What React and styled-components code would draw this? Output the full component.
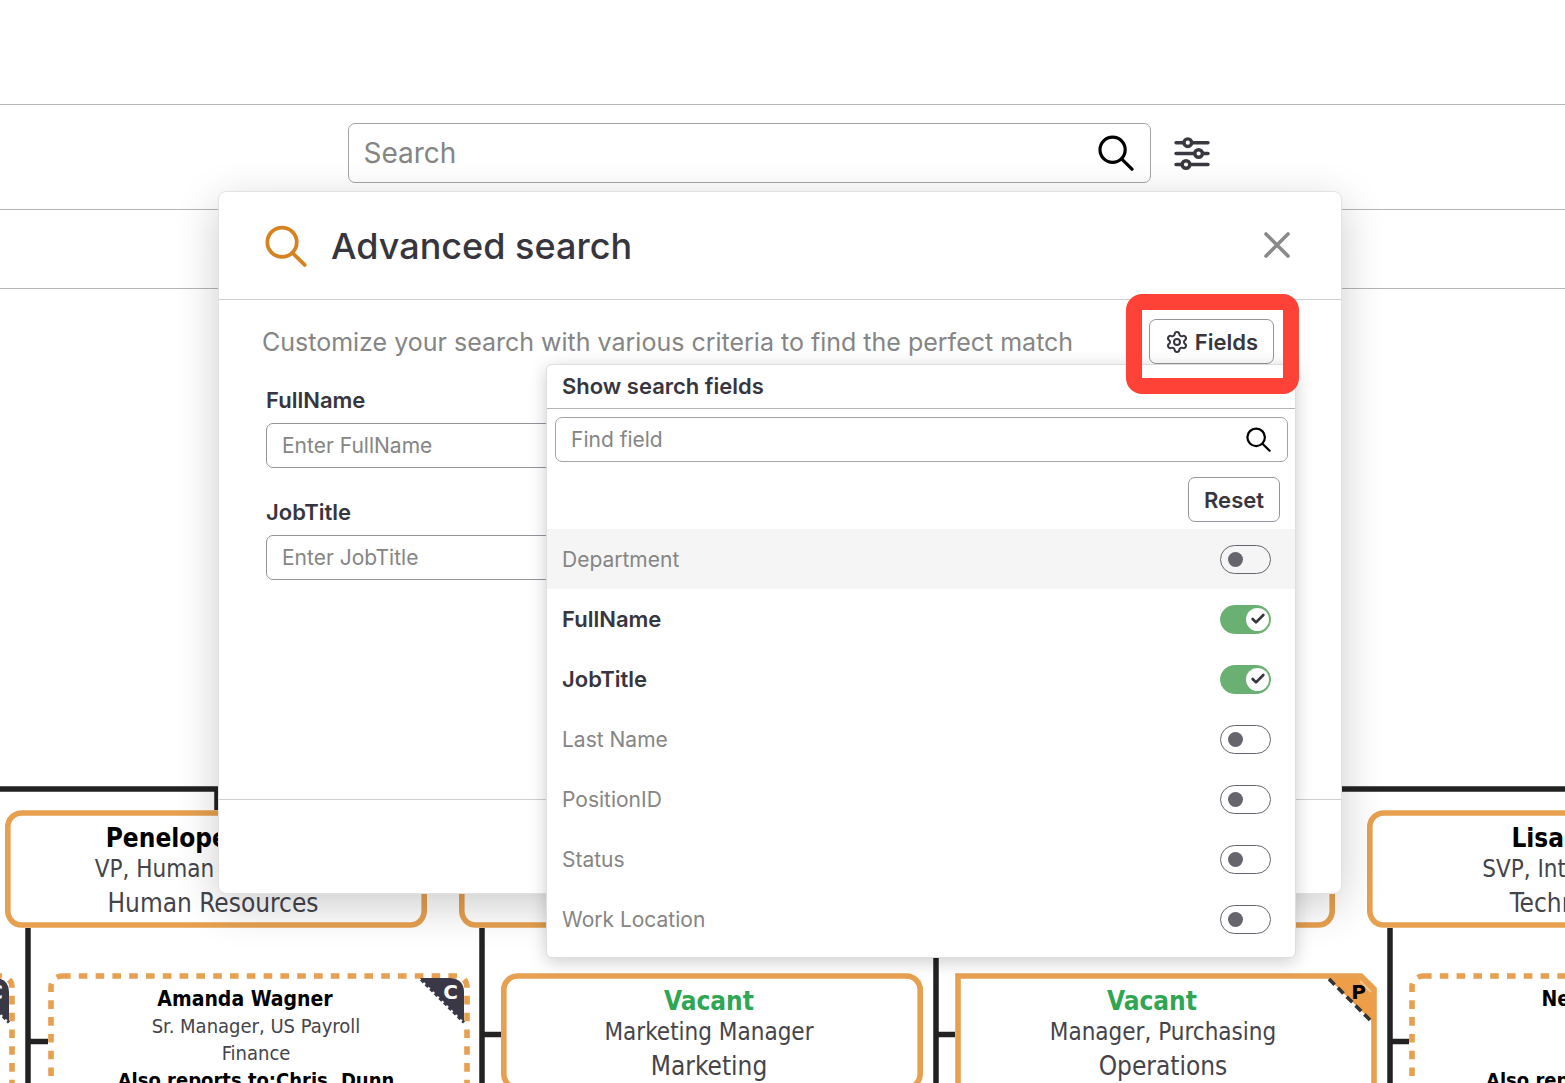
import React, { useState } from 'react';
import styled, { createGlobalStyle, css } from 'styled-components';
import { Check, Settings } from 'lucide-react';

const fieldNames = ['Department', 'FullName', 'JobTitle', 'Last Name', 'PositionID', 'Status', 'Work Location'];

const nodes = [
    {
        x: 5, y: 521, height: 118, shape: 'solid',
        name: 'Penelope Garcia', title: 'VP, Human Resources', department: 'Human Resources'
    },
    {x: 459, y: 521, height: 118, shape: 'solid'},
    {x: 913, y: 521, height: 118, shape: 'solid'},
    {
        x: 1367, y: 521, height: 118, shape: 'solid',
        name: 'Lisa Chen', title: 'SVP, Integrations', department: 'Technology'
    },
    {x: -407, y: 684, height: 140, shape: 'dashed', badge: 'C'},
    {
        x: 48, y: 684, height: 140, shape: 'dashed', badge: 'C', small: true,
        name: 'Amanda Wagner', title: 'Sr. Manager, US Payroll', department: 'Finance',
        reports: 'Also reports to:Chris, Dunn'
    },
    {
        x: 501, y: 684, height: 118, shape: 'solid', vacant: true,
        name: 'Vacant', title: 'Marketing Manager', department: 'Marketing'
    },
    {
        x: 955, y: 684, height: 118, shape: 'cut', badge: 'P', vacant: true,
        name: 'Vacant', title: 'Manager, Purchasing', department: 'Operations'
    },
    {
        x: 1409, y: 684, height: 140, shape: 'dashed', badge: 'C', small: true,
        name: 'Neil Morgan', title: 'Manager', department: 'IT',
        reports: 'Also reports to:Ann, Chen'
    }
];

const SearchIcon = ({size, color = '#000'}) => (
    <svg width={size} height={size} viewBox="0 0 36 36" fill="none" stroke={color} strokeWidth="3.2" strokeLinecap="round" aria-hidden="true">
        <circle cx="14.6" cy="14.8" r="12.6"/>
        <path d="M23.8 24.2 34 34.2"/>
    </svg>
);

const SlidersIcon = () => (
    <svg width="36" height="36" viewBox="0 0 36 36" fill="#fff" stroke="#3a3940" strokeWidth="3.4" strokeLinecap="round" aria-hidden="true">
        <path d="M2 7.7h32M2 18.5h32M2 29.5h32"/>
        <circle cx="13.8" cy="7.7" r="3.8"/>
        <circle cx="24.6" cy="18.5" r="3.8"/>
        <circle cx="12" cy="29.5" r="3.8"/>
    </svg>
);

const CloseIcon = () => (
    <svg width="28" height="28" viewBox="0 0 28 28" stroke="#8a8a8a" strokeWidth="3.6" strokeLinecap="round" aria-hidden="true">
        <path d="M3 2 25 24M25 2 3 24"/>
    </svg>
);

const NodeOutline = ({shape, height}) => (
    <svg width="422" height={height} fill="none" stroke="#e6a04f" strokeWidth="5.6" aria-hidden="true">
        {shape === 'solid' && <rect x="2.8" y="3" width="416.4" height={height - 6} rx="14"/>}
        {shape === 'dashed' &&
            <rect x="3" y="3" width="416" height={height - 6} rx="11" strokeDasharray="8.6 8.2"/>
        }
        {shape === 'cut' && <path d={`M3 3H406L419 16V${height - 3}H3Z`}/>}
    </svg>
);

const BadgeShape = ({letter}) => (
    <svg width="46" height="46" viewBox="0 0 46 46" aria-hidden="true">
        {letter === 'C'
            ? <>
                <path d="M0 0H30Q44 1 44 14V44Z" fill="#3a3847"/>
                <path d="M1 1.500 44 44.500" stroke="#3a3847" strokeWidth="3" strokeDasharray="4 2.500"/>
            </>
            : <>
                <path d="M0 0H32L46 14V45Z" fill="#ee9d48"/>
                <path d="M32 3 43 14" stroke="#f8c68c" strokeWidth="2"/>
                <path d="M1 1 45 45" stroke="#333" strokeWidth="3.6" strokeDasharray="8 4.5"/>
            </>
        }
    </svg>
);

const Connectors = () => (
    <ConnectorLayer aria-hidden="true">
        <path d="M0 500H2000M217 500V521M1578 500V521M28 639V900M482 639V900M936 639V900M1390 639V900"/>
        <path d="M28 752.500H50M482 745.500H502M936 745.500H956M1390 752.500H1411"/>
    </ConnectorLayer>
);

const OrgNode = ({node}) => (
    <NodeBox style={{left: node.x, top: node.y, height: node.height}}>
        <NodeOutline shape={node.shape} height={node.height}/>
        {node.name &&
            <NodeText $small={node.small}>
                <NodeName $vacant={node.vacant} $small={node.small} $badge={node.badge}>{node.name}</NodeName>
                <NodeLine $small={node.small}>{node.title}</NodeLine>
                <NodeLine $small={node.small} $last>{node.department}</NodeLine>
                {node.reports && <NodeReports>{node.reports}</NodeReports>}
            </NodeText>
        }
        {node.badge &&
            <Badge $letter={node.badge}>
                <BadgeShape letter={node.badge}/>
                <span>{node.badge}</span>
            </Badge>
        }
    </NodeBox>
);

const FieldsPopover = ({enabled, onToggle, onReset}) => (
    <Popover>
        <PopoverTitle>Show search fields</PopoverTitle>
        <FindBox>
            <input type="text" placeholder="Find field" aria-label="Find field"/>
            <SearchIcon size={25}/>
        </FindBox>
        <ResetRow>
            <Button type="button" onClick={onReset}>Reset</Button>
        </ResetRow>
        <FieldList>
            {fieldNames.map((name, key) =>
                <FieldRow key={name} $active={enabled.includes(name)} $hovered={key === 0}>
                    {name}
                    <input type="checkbox" checked={enabled.includes(name)} onChange={() => onToggle(name)}/>
                    <Track $on={enabled.includes(name)}>
                        <Knob $on={enabled.includes(name)}>
                            {enabled.includes(name) && <Check size={16} strokeWidth={4}/>}
                        </Knob>
                    </Track>
                </FieldRow>
            )}
        </FieldList>
    </Popover>
);

const App = () => {
    const [enabled, setEnabled] = useState(['FullName', 'JobTitle']);

    const toggleField = name => {
        setEnabled(enabled.includes(name) ? enabled.filter(item => item !== name) : [...enabled, name]);
    };

    return (
        <Page>
            <GlobalStyle/>
            <TopBar/>
            <SearchBar>
                <SearchBox>
                    <input type="search" placeholder="Search" aria-label="Search"/>
                    <SearchIcon size={36}/>
                </SearchBox>
                <IconButton type="button" aria-label="Advanced search"><SlidersIcon/></IconButton>
                <ModalLayer>
                    <Modal role="dialog" aria-labelledby="modal-title">
                        <ModalHeader>
                            <SearchIcon size={42} color="#d6821f"/>
                            <ModalTitle id="modal-title">Advanced search</ModalTitle>
                            <IconButton type="button" aria-label="Close"><CloseIcon/></IconButton>
                        </ModalHeader>
                        <ModalBody>
                            <IntroRow>
                                <Intro>Customize your search with various criteria to find the perfect match</Intro>
                                <FieldsAnchor>
                                    <Button type="button">
                                        <Settings size={24} strokeWidth={2}/>
                                        Fields
                                    </Button>
                                    <FieldsPopover
                                        enabled={enabled}
                                        onToggle={toggleField}
                                        onReset={() => setEnabled([])}
                                    />
                                    <Highlight/>
                                </FieldsAnchor>
                            </IntroRow>
                            <Form>
                                <FormField>
                                    <label htmlFor="full-name">FullName</label>
                                    <input id="full-name" type="text" placeholder="Enter FullName"/>
                                </FormField>
                                <FormField>
                                    <label htmlFor="job-title">JobTitle</label>
                                    <input id="job-title" type="text" placeholder="Enter JobTitle"/>
                                </FormField>
                            </Form>
                        </ModalBody>
                        <ModalFooter/>
                    </Modal>
                </ModalLayer>
            </SearchBar>
            <SubBar/>
            <Canvas>
                <Connectors/>
                {nodes.map((node, key) => <OrgNode node={node} key={key}/>)}
            </Canvas>
        </Page>
    );
};

export default App;


const GlobalStyle = createGlobalStyle`
    * {
        box-sizing: border-box;
    }

    body {
        margin: 0;
        background: #fff;
        color: #37363e;
        font-family: Inter, "Liberation Sans", sans-serif;
        font-size: 21px;
    }

    input, button {
        font-family: inherit;
        font-size: inherit;
        color: inherit;
    }

    input::placeholder {
        color: #858585;
        opacity: 1;
    }

    svg {
        display: block;
        flex: none;
    }
`;

const Page = styled.div`
    display: flex;
    flex-direction: column;
    min-height: 100vh;
    overflow: hidden;
`;

const TopBar = styled.header`
    height: 105px;
    border-bottom: 1px solid #b4b4b4;
`;

const SearchBar = styled.div`
    display: flex;
    justify-content: center;
    align-items: center;
    gap: 23px;
    height: 105px;
    padding: 0 32px 8px 24px;
    border-bottom: 1px solid #b4b4b4;
    position: relative;
    z-index: 2;
`;

const SubBar = styled.div`
    height: 79px;
    border-bottom: 1px solid #b4b4b4;
`;

const SearchBox = styled.div`
    display: flex;
    align-items: center;
    flex: 0 1 803px;
    height: 60px;
    padding: 0 16px 0 15px;
    border: 1px solid #a3a3a3;
    border-radius: 7px;
    font-size: 28px;
    
    input {
        flex: 1;
        min-width: 0;
        padding: 0;
        border: 0;
        outline: 0;
        background: none;
        appearance: none;
    }
`;

const IconButton = styled.button`
    padding: 0;
    border: 0;
    background: none;
    cursor: pointer;
`;

const ModalLayer = styled.div`
    position: absolute;
    top: 86px;
    left: 0;
    right: 0;
    display: flex;
    justify-content: center;
    padding: 0 5px 0 0;
`;

const Modal = styled.div`
    width: 100%;
    max-width: 1124px;
    background: #fff;
    border: 1px solid #e2e2e2;
    border-radius: 8px;
    box-shadow: 0 12px 44px rgba(0, 0, 0, 0.2);
`;

const ModalHeader = styled.div`
    display: flex;
    align-items: center;
    gap: 24px;
    height: 108px;
    padding: 0 50px 0 46px;
    border-bottom: 1px solid #cfcfcf;
`;

const ModalTitle = styled.h2`
    flex: 1;
    margin: 0;
    font-size: 36px;
    line-height: 44px;
    font-weight: 500;
`;

const ModalBody = styled.div`
    min-height: 500px;
    padding: 19px 67px 0 43px;
    border-bottom: 1px solid #cfcfcf;
`;

const ModalFooter = styled.div`
    height: 93px;
`;

const IntroRow = styled.div`
    display: flex;
    align-items: center;
    justify-content: space-between;
`;

const Intro = styled.p`
    margin: 0;
    color: #858585;
    font-size: 25px;
    line-height: 32px;
    white-space: nowrap;
`;

const FieldsAnchor = styled.div`
    position: relative;
`;

const Button = styled.button`
    display: flex;
    align-items: center;
    gap: 6px;
    height: 45px;
    padding: 0 15px;
    border: 1px solid #94949c;
    border-radius: 7px;
    background: #fff;
    font-size: 22px;
    font-weight: 600;
    cursor: pointer;
`;

const Highlight = styled.div`
    position: absolute;
    inset: -25px -25px -30px -23px;
    border: 16px solid #ff4238;
    border-radius: 16px;
    pointer-events: none;
`;

const Form = styled.div`
    display: flex;
    flex-direction: column;
    gap: 32px;
    padding: 24px 0 0 4px;
`;

const FormField = styled.div`
    display: flex;
    flex-direction: column;
    gap: 11px;
    
    label {
        font-size: 22px;
        line-height: 24px;
        font-weight: 600;
    }
    
    input {
        height: 45px;
        padding: 0 15px;
        border: 1px solid #94949c;
        border-radius: 7px;
    }
`;

const Popover = styled.div`
    position: absolute;
    top: 100%;
    right: -22px;
    width: 750px;
    padding-bottom: 8px;
    background: #fff;
    border: 1px solid #dedede;
    border-radius: 6px;
    box-shadow: 0 4px 18px rgba(0, 0, 0, 0.2);
`;

const PopoverTitle = styled.h3`
    margin: 0;
    padding: 0 15px;
    border-bottom: 1px solid #b4b4b4;
    font-size: 22px;
    line-height: 43px;
    font-weight: 600;
`;

const FindBox = styled.div`
    display: flex;
    align-items: center;
    height: 45px;
    margin: 8px 7px 15px 8px;
    padding: 0 16px 0 15px;
    border: 1px solid #a3a3a3;
    border-radius: 7px;
    
    input {
        flex: 1;
        min-width: 0;
        padding: 0;
        border: 0;
        outline: 0;
    }
`;

const ResetRow = styled.div`
    display: flex;
    justify-content: flex-end;
    padding: 0 15px 7px;
`;

const FieldList = styled.div`
    display: flex;
    flex-direction: column;
`;

const FieldRow = styled.label`
    display: flex;
    align-items: center;
    justify-content: space-between;
    height: 60px;
    padding: 0 24px 0 15px;
    background: ${props => props.$hovered ? '#f5f5f5' : 'none'};
    color: ${props => props.$active ? '#37363e' : '#858585'};
    font-size: ${props => props.$active ? 22 : 21}px;
    font-weight: ${props => props.$active ? 600 : 400};
    cursor: pointer;
    
    input {
        position: absolute;
        opacity: 0;
    }
`;

const Track = styled.span`
    display: flex;
    align-items: center;
    justify-content: ${props => props.$on ? 'flex-end' : 'flex-start'};
    width: 51px;
    height: 29px;
    padding: 0 ${props => props.$on ? 1 : 7}px;
    border: 1px solid ${props => props.$on ? '#6bb073' : '#66656d'};
    border-radius: 15px;
    background: ${props => props.$on ? '#6bb073' : 'none'};
`;

const Knob = styled.span`
    display: flex;
    align-items: center;
    justify-content: center;
    width: ${props => props.$on ? 23 : 15}px;
    height: ${props => props.$on ? 23 : 15}px;
    border-radius: 50%;
    background: ${props => props.$on ? '#fff' : '#66656d'};
    color: #37363e;
`;

const Canvas = styled.main`
    position: relative;
    flex: 1;
    min-height: 794px;
    overflow: hidden;
    font-family: "DejaVu Sans Condensed", "Noto Sans", sans-serif;
`;

const ConnectorLayer = styled.svg`
    width: 100%;
    height: 100%;
    position: absolute;
    fill: none;
    stroke: #222;
    stroke-width: 5.5;
`;

const NodeBox = styled.div`
    position: absolute;
    width: 422px;
    background: #fff;
    border-radius: 14px;
    
    > svg {
        position: absolute;
    }
`;

const NodeText = styled.div`
    position: relative;
    padding: ${props => props.$small ? 13 : 12}px 10px 0 4px;
    text-align: center;
    white-space: nowrap;
`;

const NodeName = styled.div`
    color: ${props => props.$vacant ? '#2fa653' : '#000'};
    font-size: ${props => props.$small ? 21 : 26}px;
    line-height: ${props => props.$small ? 27 : 32}px;
    font-weight: 700;
    
    ${props => props.$badge && css`
        padding-right: 22px;
    `}
`;

const NodeLine = styled.div`
    color: #45444b;
    font-size: ${props => props.$small ? 20 : props.$last ? 26 : 24}px;
    line-height: ${props => props.$small ? 27 : props.$last ? 38 : 30}px;
`;

const NodeReports = styled.div`
    color: #000;
    font-size: 20px;
    line-height: 27px;
    font-weight: 700;
`;

const Badge = styled.div`
    position: absolute;
    top: 5px;
    right: ${props => props.$letter === 'C' ? 4 : 3}px;
    color: ${props => props.$letter === 'C' ? '#fff' : '#000'};
    font-family: "DejaVu Sans", sans-serif;
    font-size: 20px;
    line-height: 28px;
    font-weight: 700;
    
    span {
        position: absolute;
        top: 0;
        right: 8px;
    }
`;
